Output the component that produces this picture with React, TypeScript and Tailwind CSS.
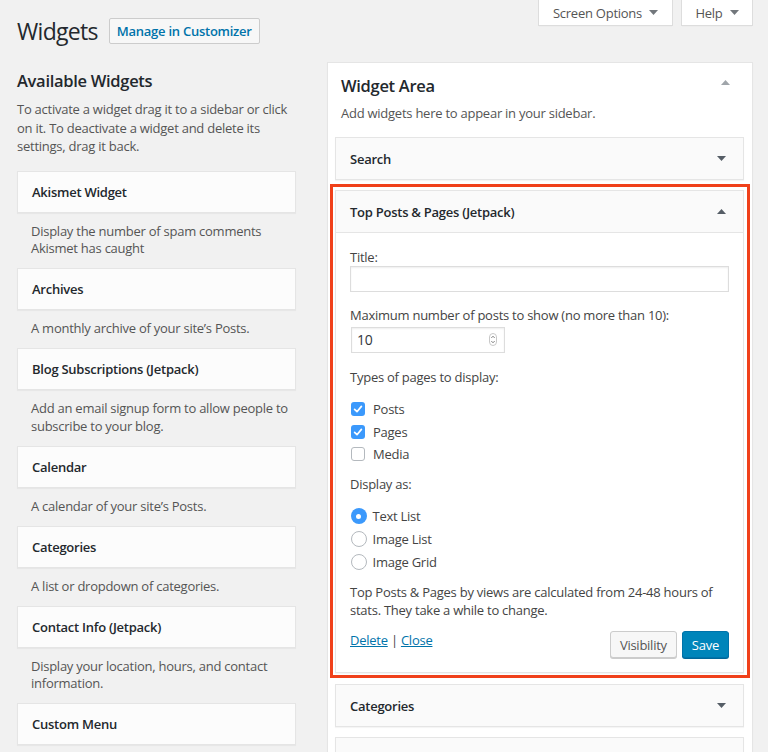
import React from "react";

const available = [
  { name: "Akismet Widget", desc: "Display the number of spam comments Akismet has caught" },
  { name: "Archives", desc: "A monthly archive of your site’s Posts." },
  { name: "Blog Subscriptions (Jetpack)", desc: "Add an email signup form to allow people to subscribe to your blog." },
  { name: "Calendar", desc: "A calendar of your site’s Posts." },
  { name: "Categories", desc: "A list or dropdown of categories." },
  { name: "Contact Info (Jetpack)", desc: "Display your location, hours, and contact information." },
  { name: "Custom Menu", desc: "Add a custom menu to your sidebar." },
];

function Arrow({ up = false, color = "#555d66" }: { up?: boolean; color?: string }) {
  return (
    <svg width="9" height="5" viewBox="0 0 9 5" className="shrink-0">
      <path d={up ? "M0 5 L4.5 0 L9 5 Z" : "M0 0 L4.5 5 L9 0 Z"} fill={color} />
    </svg>
  );
}

function Checkbox({ checked, label }: { checked: boolean; label: string }) {
  return (
    <div className="flex h-[22.5px] items-center gap-[8px]">
      {checked ? (
        <span className="ml-[1px] flex h-[14px] w-[14px] items-center justify-center rounded-[3px] bg-[#3b99fc]">
          <svg width="14" height="14" viewBox="0 0 14 14">
            <path d="M3.6 7.3 L6 9.7 L10.4 4.4" fill="none" stroke="#fff" strokeWidth="1.7" strokeLinecap="round" strokeLinejoin="round" />
          </svg>
        </span>
      ) : (
        <span className="ml-[1px] h-[14px] w-[14px] rounded-[3px] border border-[#b4b9be] bg-white" />
      )}
      <span>{label}</span>
    </div>
  );
}

function Radio({ checked, label }: { checked: boolean; label: string }) {
  return (
    <div className="flex h-[23px] items-center gap-[6px]">
      {checked ? (
        <span className="ml-[0.5px] flex h-[16px] w-[16px] items-center justify-center rounded-full bg-[#3b99fc]">
          <span className="h-[5px] w-[5px] rounded-full bg-white" />
        </span>
      ) : (
        <span className="ml-[0.5px] h-[16px] w-[16px] rounded-full border border-[#b4b9be] bg-white" />
      )}
      <span>{label}</span>
    </div>
  );
}

function ClosedWidget({ title }: { title: string }) {
  return (
    <div className="flex h-[43px] items-center justify-between border border-[#e5e5e5] bg-[#fafafa] pl-[14px] pr-[17px] font-semibold text-[#23282d] shadow-[0_1px_1px_rgba(0,0,0,0.04)]">
      <span>{title}</span>
      <Arrow />
    </div>
  );
}

export default function App() {
  return (
    <div className="min-h-screen bg-[#f1f1f1] font-['Open_Sans',sans-serif] text-[13px] leading-[18px] tracking-[-0.25px] text-[#444]">
      {/* header */}
      <div className="flex items-start justify-between pl-[17px] pr-[15px]">
        <div className="mt-[18px] flex items-center gap-[11px]">
          <h1 className="text-[23px] leading-[26px] tracking-[-0.7px] text-[#23282d]">Widgets</h1>
          <button className="h-[26px] rounded-[2px] border border-[#ccc] bg-[#f7f7f7] px-[7px] text-[13px] font-semibold text-[#0073aa]">
            Manage in Customizer
          </button>
        </div>
        <div className="flex gap-[8px]">
          <div className="flex h-[26px] w-[135px] items-center justify-center gap-[7px] border-x border-b border-[#ddd] bg-white text-[#555] shadow-[0_1px_1px_-1px_rgba(0,0,0,0.1)]">
            <span>Screen Options</span>
            <Arrow color="#72777c" />
          </div>
          <div className="flex h-[26px] w-[72px] items-center justify-center gap-[7px] border-x border-b border-[#ddd] bg-white text-[#555] shadow-[0_1px_1px_-1px_rgba(0,0,0,0.1)]">
            <span>Help</span>
            <Arrow color="#72777c" />
          </div>
        </div>
      </div>

      <div className="mt-[18px] flex gap-[31px] pl-[17px] pr-[15px]">
        {/* available widgets */}
        <div className="w-[279px] shrink-0">
          <h2 className="mt-[7px] text-[16.5px] font-semibold leading-[24px] tracking-[-0.3px] text-[#23282d]">Available Widgets</h2>
          <p className="mt-[7px] leading-[18.5px] text-[#555]">
            To activate a widget drag it to a sidebar or click on it. To deactivate a widget and delete its settings, drag it back.
          </p>
          <div className="mt-[15px]">
            {available.map((w) => (
              <div key={w.name}>
                <div className="flex h-[42px] items-center border border-[#e5e5e5] bg-[#fcfcfc] px-[14px] font-semibold text-[#23282d] shadow-[0_1px_1px_rgba(0,0,0,0.04)]">
                  {w.name}
                </div>
                <div className="pb-[10.5px] pl-[14px] pr-[6px] pt-[10px] leading-[17.5px] text-[#555]">{w.desc}</div>
              </div>
            ))}
          </div>
        </div>

        {/* sidebar */}
        <div className="w-[426px] shrink-0 self-start border border-[#e5e5e5] bg-white pb-[20px] shadow-[0_1px_1px_rgba(0,0,0,0.04)]">
          <div className="flex items-start justify-between pl-[13px] pr-[22px] pt-[11px]">
            <h2 className="text-[16.5px] font-semibold leading-[24px] tracking-[-0.3px] text-[#23282d]">Widget Area</h2>
            <div className="mt-[6px]">
              <Arrow up color="#a0a5aa" />
            </div>
          </div>
          <p className="mt-[6px] px-[13px] text-[#555]">Add widgets here to appear in your sidebar.</p>

          <div className="mt-[15px] pl-[7px] pr-[8px]">
            <div className="mb-[4px]">
              <ClosedWidget title="Search" />
            </div>

            <div className="-ml-[5px] -mr-[6px] mb-[6px] border-[3px] border-[#f0401a] pb-[2px] pl-[2px] pr-[3px] pt-[3px]">
              <div className="border border-[#e5e5e5] bg-white shadow-[0_1px_1px_rgba(0,0,0,0.04)]">
                <div className="flex h-[42px] items-center justify-between border-b border-[#e5e5e5] bg-[#fafafa] pl-[14px] pr-[17px] font-semibold text-[#23282d]">
                  <span>Top Posts &amp; Pages (Jetpack)</span>
                  <Arrow up />
                </div>
                <div className="px-[14px] pb-[14px] pt-[15px]">
                  <div>Title:</div>
                  <div className="h-[26px] w-full border border-[#ddd] bg-white shadow-[inset_0_1px_2px_rgba(0,0,0,0.07)]" />

                  <div className="mt-[13.5px]">Maximum number of posts to show (no more than 10):</div>
                  <div className="ml-[1px] mt-[3px] flex h-[26px] w-[154px] items-center justify-between border border-[#ddd] bg-white pl-[5px] pr-[7px] text-[14px] text-[#32373c] shadow-[inset_0_1px_2px_rgba(0,0,0,0.07)]">
                    <span>10</span>
                    <svg width="8" height="13" viewBox="0 0 8 13">
                      <rect x="0.5" y="0.5" width="7" height="12" rx="3.5" fill="#fff" stroke="#c8c8c8" />
                      <path d="M2.3 5 L4 3.2 L5.7 5" fill="none" stroke="#777" strokeWidth="0.9" />
                      <path d="M2.3 8 L4 9.8 L5.7 8" fill="none" stroke="#777" strokeWidth="0.9" />
                    </svg>
                  </div>

                  <div className="mt-[15.5px]">Types of pages to display:</div>
                  <div className="mt-[12px]">
                    <Checkbox checked label="Posts" />
                    <Checkbox checked label="Pages" />
                    <Checkbox checked={false} label="Media" />
                  </div>

                  <div className="mt-[9px]">Display as:</div>
                  <div className="mt-[12px]">
                    <Radio checked label="Text List" />
                    <Radio checked={false} label="Image List" />
                    <Radio checked={false} label="Image Grid" />
                  </div>

                  <p className="mt-[9px] leading-[18.3px]">
                    Top Posts &amp; Pages by views are calculated from 24-48 hours of stats. They take a while to change.
                  </p>

                  <div className="mt-[11px] flex items-start justify-between">
                    <div className="pt-[1px]">
                      <a className="text-[#0073aa] underline">Delete</a>
                      <span> | </span>
                      <a className="text-[#0073aa] underline">Close</a>
                    </div>
                    <div className="mt-[1px] flex gap-[5px]">
                      <button className="h-[27px] rounded-[3px] border border-[#ccc] bg-[#f7f7f7] px-[9px] text-[13px] text-[#555] shadow-[0_1px_0_#ccc]">
                        Visibility
                      </button>
                      <button className="h-[27px] rounded-[3px] border border-[#0073aa] bg-[#0085ba] px-[9px] text-[13px] text-white shadow-[0_1px_0_#006799]">
                        Save
                      </button>
                    </div>
                  </div>
                </div>
              </div>
            </div>

            <div className="mb-[10px]">
              <ClosedWidget title="Categories" />
            </div>
            <ClosedWidget title="Archives" />
          </div>
        </div>
      </div>
    </div>
  );
}
